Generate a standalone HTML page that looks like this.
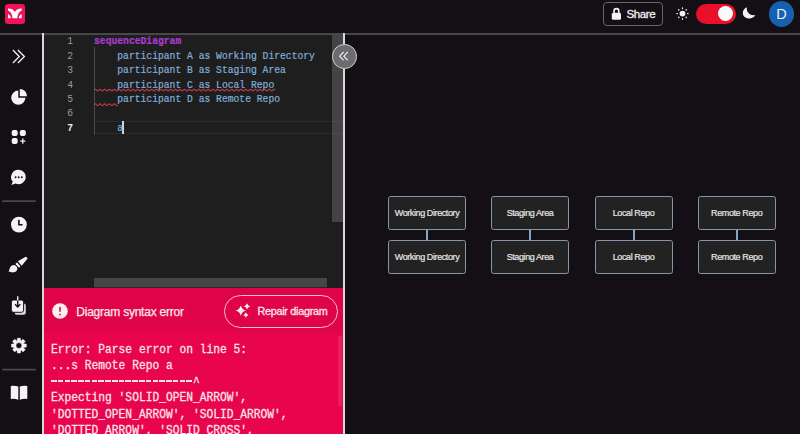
<!DOCTYPE html>
<html><head><meta charset="utf-8">
<style>
*{margin:0;padding:0;box-sizing:border-box}
html,body{width:800px;height:434px;overflow:hidden;background:#130f14;font-family:"Liberation Sans",sans-serif}
.abs{position:absolute}
#topline{left:0;top:33px;width:800px;height:1.8px;background:#47464a}
#logo{left:5px;top:4px;width:20px;height:20px;border-radius:3px;background:#f2125a}
#vl1{left:42px;top:33px;width:2px;height:401px;background:#d8d8d8}
#vl2{left:343px;top:33px;width:2px;height:401px;background:#d8d8d8}
#editor{left:44px;top:35px;width:299px;height:253px;background:#1e1e1e;overflow:hidden}
.code{font-family:"Liberation Mono",monospace;font-size:9.7px;line-height:12.2034px;white-space:pre;-webkit-text-stroke:0.2px currentColor;transform:scaleY(1.18);transform-origin:0 0}
#gutter{left:0;top:0;width:29px;text-align:right;color:#9a9a9a;-webkit-text-stroke:0}
#lines{left:50px;top:0;color:#7eaed9}
#err{left:44px;top:288px;width:299px;height:146px;background:linear-gradient(#df034a 0,#df034a 44px,#e8054e 44px)}
.errtxt{font-family:"Liberation Mono",monospace;font-size:11.28px;line-height:14.375px;white-space:pre;color:#fbe3ea;-webkit-text-stroke:0.25px #fbe3ea;transform:scaleY(1.12);transform-origin:0 0}
.box{width:78px;height:34px;border:1.2px solid #8596aa;border-radius:2.5px;background:#222222;color:#e6e6e6;font-size:9px;text-align:center;line-height:32px;letter-spacing:-0.4px;-webkit-text-stroke:0.2px #e6e6e6}
.vline{width:2px;height:10px;background:#84a4c4}
#share{left:602.5px;top:2px;width:60.5px;height:23.5px;border:1px solid #6a686b;border-radius:4px;color:#f2f2f2;font-size:12px}
#toggle{left:696px;top:4px;width:39.5px;height:19.5px;border-radius:10px;background:#e8102a}
#knob{left:717.6px;top:5.8px;width:15.6px;height:15.6px;border-radius:50%;background:#fbfbfb}
#avatar{left:768.8px;top:1px;width:25.6px;height:25.6px;border-radius:50%;background:#1760b0;color:#e3f2fd;font-size:14.5px;text-align:center;line-height:27px}
</style></head><body>
<div id="logo" class="abs"></div>
<svg class="abs" style="left:0;top:0" width="800" height="434" viewBox="0 0 800 434">
  <!-- logo M -->
  <path d="M8,8.6 C10.5,8.4 13.5,9.5 14.9,12 C16.3,9.5 19.3,8.4 21.7,8.6 L21.7,10.6 C19.5,11.5 17.5,14 17.3,18.2 L12.5,18.2 C12.3,14 10.3,11.5 8,10.6 Z M8,13.9 C9.8,14.8 10.9,16.5 10.9,18.2 L8,18.2 Z M21.7,13.9 C19.9,14.8 18.8,16.5 18.8,18.2 L21.7,18.2 Z" fill="#fff"/>
  <!-- lock -->
  <rect x="611.8" y="12.8" width="9.2" height="6.9" rx="1.5" fill="#f4f4f4"/>
  <path d="M614,13 V11 A2.4,2.4 0 0 1 618.8,11 V13" stroke="#f4f4f4" stroke-width="1.6" fill="none"/>
  <!-- sun -->
  <circle cx="682.5" cy="13.6" r="2.9" fill="#f4f4f4"/>
  <g stroke="#f4f4f4" stroke-width="1.3" stroke-linecap="round">
    <path d="M682.5,8 V8.5 M682.5,18.7 V19.2 M676.9,13.6 H677.4 M687.6,13.6 H688.1 M678.6,9.7 L678.9,10 M686.1,17.2 L686.4,17.5 M678.6,17.5 L678.9,17.2 M686.1,10 L686.4,9.7"/>
  </g>
  <!-- moon -->
  <path d="M746.9,7.2 C744.2,8.2 742.8,10.6 742.8,13.1 C742.8,16.3 745.7,18.6 749.2,18.6 C751.9,18.6 754.3,17.3 755.4,15.1 C752.6,15.7 750,14.9 748.5,13.1 C747,11.3 746.5,9.2 746.9,7.2 Z" fill="#f4f4f4"/>
  <!-- sidebar chevrons -->
  <path d="M12.9,50 L19.3,56.5 L12.9,63 M17.9,50 L24.4,56.5 L17.9,63" stroke="#f4f4f4" stroke-width="1.3" fill="none"/>
  <!-- pie -->
  <path d="M18.3,90.6 L18.3,97.7 L25.4,97.7 A7.1,7.1 0 1 1 18.3,90.6 Z" fill="#f4f4f4"/>
  <path d="M19.8,89 A7.2,7.2 0 0 1 27,96.2 L19.8,96.2 Z" fill="#f4f4f4"/>
  <!-- apps -->
  <rect x="11.7" y="130" width="6" height="6" rx="2" fill="#f4f4f4"/>
  <rect x="19.8" y="130" width="6" height="6" rx="2" fill="#f4f4f4"/>
  <rect x="11.7" y="138" width="6" height="6" rx="2" fill="#f4f4f4"/>
  <path d="M22.8,138.6 V143.8 M20.2,141.2 H25.4" stroke="#f4f4f4" stroke-width="1.3"/>
  <!-- chat -->
  <path d="M18.6,169.8 A7.4,7.2 0 1 1 15.5,183.6 L11.3,185 L12.8,181.6 A7.4,7.2 0 0 1 18.6,169.8 Z" fill="#f4f4f4"/>
  <circle cx="15.6" cy="177.2" r="0.95" fill="#131014"/>
  <circle cx="18.7" cy="177.2" r="0.95" fill="#131014"/>
  <circle cx="21.8" cy="177.2" r="0.95" fill="#131014"/>
  <!-- separator -->
  <rect x="2" y="200.2" width="34" height="1.8" rx="0.9" fill="#49464b"/>
  <!-- clock -->
  <circle cx="18.9" cy="224.6" r="7.9" fill="#f4f4f4"/>
  <path d="M18.9,219.8 V224.7 H22.6" stroke="#131014" stroke-width="1.6" fill="none"/>
  <!-- brush -->
  <g transform="translate(26.8,257.6) rotate(50)" fill="#f4f4f4">
    <path d="M-1.4,0.3 Q0,-1 1.4,0.3 L2.9,9.2 L-2.9,9.2 Z"/>
    <rect x="-2.6" y="10.5" width="5.2" height="2.2" rx="0.5"/>
    <path d="M-3.5,17 A3.6,3.6 0 0 1 3.6,16.5 C3.6,19.5 2,21 -1,23 C-1.2,21.5 -3.5,20 -3.5,17 Z"/>
  </g>
  <!-- download -->
  <rect x="14.6" y="303.6" width="11.2" height="11.2" rx="2.2" fill="#dcdcdc"/>
  <rect x="11.3" y="300" width="12.3" height="12.3" rx="2.2" fill="#f4f4f4" stroke="#131014" stroke-width="1"/>
  <path d="M17.7,296.2 V300.5" stroke="#f4f4f4" stroke-width="1.4"/>
  <path d="M17.7,300.5 V306.8 M15.1,304.3 L17.7,306.9 L20.3,304.3" stroke="#131014" stroke-width="1.4" fill="none"/>
  <!-- gear -->
  <g transform="translate(18.9,345.6)" fill="#f4f4f4">
    <path id="gear" stroke="#f4f4f4" stroke-width="0.6" stroke-linejoin="round" d="M-1.69,-4.92 L-1.49,-7.35 L1.49,-7.35 L1.69,-4.92 L2.29,-4.67 L4.14,-6.25 L6.25,-4.14 L4.67,-2.29 L4.92,-1.69 L7.35,-1.49 L7.35,1.49 L4.92,1.69 L4.67,2.29 L6.25,4.14 L4.14,6.25 L2.29,4.67 L1.69,4.92 L1.49,7.35 L-1.49,7.35 L-1.69,4.92 L-2.29,4.67 L-4.14,6.25 L-6.25,4.14 L-4.67,2.29 L-4.92,1.69 L-7.35,1.49 L-7.35,-1.49 L-4.92,-1.69 L-4.67,-2.29 L-6.25,-4.14 L-4.14,-6.25 L-2.29,-4.67 Z M0,-3 A3,3 0 1 0 0,3 A3,3 0 1 0 0,-3 Z" fill-rule="evenodd"/>
  </g>
  <!-- separator 2 -->
  <rect x="2" y="368.7" width="34" height="1.7" rx="0.85" fill="#4b484d"/>
  <!-- book -->
  <path d="M10.8,386 Q14.5,385.2 18.3,386.6 V399.8 Q14.5,398.4 10.8,399 Z" fill="#f4f4f4"/>
  <path d="M27.3,386 Q23.5,385.2 19.8,386.6 V399.8 Q23.5,398.4 27.3,399 Z" fill="#f4f4f4"/>
</svg>
<div id="topline" class="abs"></div>
<div id="vl1" class="abs"></div>
<div id="editor" class="abs">
  <div class="abs" style="left:50px;top:86px;width:249px;height:13.4px;border-top:1px solid #2c2c2c;border-bottom:1px solid #2c2c2c"></div>
  <div class="abs" style="left:50px;top:12px;width:1px;height:87.5px;background:#4a4a4a"></div>
  <svg class="abs" style="left:0;top:0" width="299" height="253">
    <path d="M50.2,55.1 q1.175,-1.7 2.350,0 t2.350,0 t2.350,0 t2.350,0 t2.350,0 t2.350,0 t2.350,0 t2.350,0 t2.350,0 t2.350,0 t2.350,0 t2.350,0 t2.350,0 t2.350,0 t2.350,0 t2.350,0 t2.350,0 t2.350,0 t2.350,0 t2.350,0 t2.350,0 t2.350,0 t2.350,0 t2.350,0 t2.350,0 t2.350,0 t2.350,0 t2.350,0 t2.350,0 t2.350,0 t2.350,0 t2.350,0 t2.350,0 t2.350,0 t2.350,0 t2.350,0 t2.350,0 t2.350,0 t2.350,0 t2.350,0 t2.350,0 t2.350,0 t2.350,0 t2.350,0 t2.350,0 t2.350,0 t2.350,0 t2.350,0 t2.350,0 t2.350,0 t2.350,0 t2.350,0 t2.350,0 t2.350,0 t2.350,0 t2.350,0 t2.350,0 t2.350,0 t2.350,0 t2.350,0 t2.350,0 t2.350,0 t2.350,0 t2.350,0 t2.350,0 t2.350,0 t2.350,0 t2.350,0 t2.350,0 t2.350,0 t2.350,0 t2.350,0 t2.350,0 t2.350,0 t2.350,0 t2.350,0 t2.350,0" stroke="#c43a48" stroke-width="1.1" fill="none"/>
    <path d="M50.2,69.75 q1.175,-1.7 2.350,0 t2.350,0 t2.350,0 t2.350,0 t2.350,0 t2.350,0 t2.350,0 t2.350,0 t2.350,0 t2.350,0" stroke="#c43a48" stroke-width="1.1" fill="none"/>
    <rect x="288" y="0" width="11" height="187" fill="rgba(121,121,121,0.42)"/>
    <rect x="50" y="243" width="233" height="9.3" fill="#464646"/>
  </svg>
  <div class="abs" style="left:78.3px;top:86px;width:1.4px;height:13.4px;background:#d4d4d4"></div>
  <div id="gutter" class="abs code">1
2
3
4
5
6
<span style="color:#f0f0f0;font-weight:bold">7</span></div>
  <div id="lines" class="abs code"><span style="color:#a83ccc;font-weight:bold">sequenceDiagram</span>
    participant A as Working Directory
    participant B as Staging Area
    participant C as Local Repo
    participant D as Remote Repo

    a</div>
</div>
<div id="err" class="abs">
  <div class="abs" style="left:294px;top:48px;width:3.6px;height:69.5px;background:#eb1d5e"></div>
  <div class="abs" style="left:7px;top:92.4px;width:142.2px;height:1.2px;background:repeating-linear-gradient(90deg,#fbe3ea 0,#fbe3ea 5.6px,transparent 5.6px,transparent 6.77px)"></div>
  <svg class="abs" style="left:0;top:0" width="299" height="50">
    <circle cx="16" cy="23" r="7.8" fill="#fbeef2"/>
    <rect x="15.2" y="18.8" width="1.6" height="5" rx="0.6" fill="#e2074c"/>
    <circle cx="16" cy="26.6" r="0.95" fill="#e2074c"/>
    <path d="M196.80,17.40 Q197.94,21.46 202.00,22.60 Q197.94,23.74 196.80,27.80 Q195.66,23.74 191.60,22.60 Q195.66,21.46 196.80,17.40 Z M203.00,15.30 Q203.68,17.72 206.10,18.40 Q203.68,19.08 203.00,21.50 Q202.32,19.08 199.90,18.40 Q202.32,17.72 203.00,15.30 Z M201.90,24.30 Q202.49,26.41 204.60,27.00 Q202.49,27.59 201.90,29.70 Q201.31,27.59 199.20,27.00 Q201.31,26.41 201.90,24.30 Z " fill="#fbeef2"/>
  </svg>
  <div class="abs" style="left:32.3px;top:15.8px;font-size:12px;line-height:16px;color:#fbe6ec;letter-spacing:-0.23px;-webkit-text-stroke:0.25px #fbe6ec">Diagram syntax error</div>
  <div class="abs" style="left:180px;top:7px;width:113.5px;height:32.8px;border-radius:17px;border:1.5px solid #f6bfcd"></div>
  <div class="abs" style="left:213.5px;top:15.5px;font-size:10.8px;line-height:14px;color:#fbe6ec;letter-spacing:-0.28px;-webkit-text-stroke:0.3px #fbe6ec">Repair diagram</div>
  <div class="abs errtxt" style="left:7px;top:54.2px">Error: Parse error on line 5:
...s Remote Repo a
                     ^
Expecting 'SOLID_OPEN_ARROW',
'DOTTED_OPEN_ARROW', 'SOLID_ARROW',
'DOTTED_ARROW', 'SOLID_CROSS',</div>
</div>
<div id="vl2" class="abs"></div>

<div class="abs" style="left:332.2px;top:44.2px;width:24.5px;height:24.5px;border-radius:50%;background:#6c6b6e;border:1.5px solid #cdcdcd"></div>
<svg class="abs" style="left:332px;top:44px" width="25" height="25"><path d="M11.6,8 L7.6,12.2 L11.6,16.4 M15.8,8 L11.8,12.2 L15.8,16.4" stroke="#f2f2f2" stroke-width="1.1" fill="none"/></svg>
<div id="share" class="abs"><span class="abs" style="left:23px;line-height:14px;font-size:11.6px;letter-spacing:-0.45px;-webkit-text-stroke:0.3px #f2f2f2;top:4px">Share</span></div>
<div id="toggle" class="abs"></div>
<div id="knob" class="abs"></div>
<div id="avatar" class="abs">D</div>

<div class="abs vline" style="left:426.1px;top:229.5px"></div>
<div class="abs vline" style="left:529.1px;top:229.5px"></div>
<div class="abs vline" style="left:632.5px;top:229.5px"></div>
<div class="abs vline" style="left:735.7px;top:229.5px"></div>
<div class="abs box" style="left:388px;top:196px">Working Directory</div>
<div class="abs box" style="left:388px;top:239.5px;height:34.2px;line-height:32.6px">Working Directory</div>
<div class="abs box" style="left:491px;top:196px">Staging Area</div>
<div class="abs box" style="left:491px;top:239.5px;height:34.2px;line-height:32.6px">Staging Area</div>
<div class="abs box" style="left:594.5px;top:196px">Local Repo</div>
<div class="abs box" style="left:594.5px;top:239.5px;height:34.2px;line-height:32.6px">Local Repo</div>
<div class="abs box" style="left:697.7px;top:196px">Remote Repo</div>
<div class="abs box" style="left:697.7px;top:239.5px;height:34.2px;line-height:32.6px">Remote Repo</div>
</body></html>
